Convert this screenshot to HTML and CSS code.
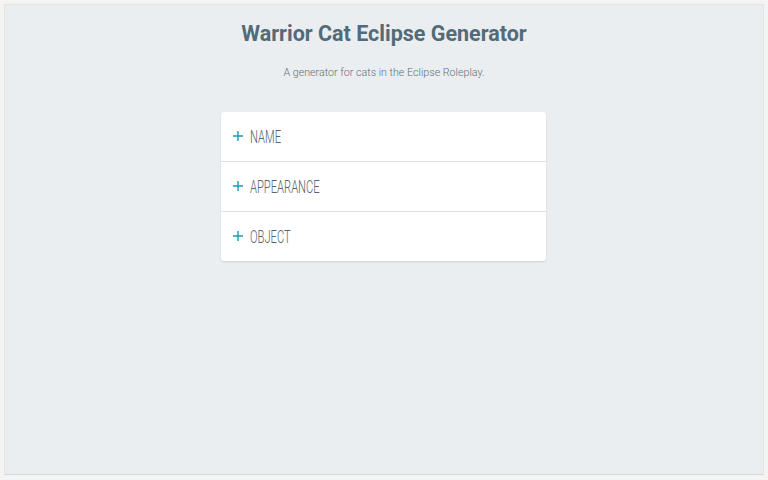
FILE: index.html
```html
<!DOCTYPE html>
<html>
<head>
<meta charset="utf-8">
<link rel="stylesheet" href="styles.css">
</head>
<body>
<div class="panel">
  <h1 class="title">Warrior Cat Eclipse Generator</h1>
  <p class="subtitle">A generator for cats in the Eclipse Roleplay.</p>
  <div class="card">
    <div class="row"><svg class="plus" viewBox="0 0 10 10" width="10" height="10"><path d="M5 0V10M0 5H10" stroke="#1a9db0" stroke-width="1.4" fill="none"/></svg><span class="label">NAME</span></div>
    <div class="row"><svg class="plus" viewBox="0 0 10 10" width="10" height="10"><path d="M5 0V10M0 5H10" stroke="#1a9db0" stroke-width="1.4" fill="none"/></svg><span class="label">APPEARANCE</span></div>
    <div class="row"><svg class="plus" viewBox="0 0 10 10" width="10" height="10"><path d="M5 0V10M0 5H10" stroke="#1a9db0" stroke-width="1.4" fill="none"/></svg><span class="label">OBJECT</span></div>
  </div>
</div>
</body>
</html>
```
FILE: styles.css
```css
html, body { margin: 0; padding: 0; }
body {
  background: #f4f4f3;
  padding: 4px;
  height: 480px;
  box-sizing: border-box;
  font-family: Roboto, "Liberation Sans", sans-serif;
}
.panel {
  background: #eaeef1;
  height: 471px;
  box-sizing: border-box;
  border: 1px solid #e2e5e8;
  border-bottom-color: #d5d8dc;
  display: flex;
  flex-direction: column;
  align-items: center;
}
.title {
  margin: 15px 0 0;
  font-size: 21.5px;
  font-weight: 700;
  color: #536a78;
  line-height: 28px;
}
.subtitle {
  margin: 18px 0 0;
  font-size: 10.7px;
  font-weight: 300;
  color: #5f6e78;
  line-height: 14px;
}
.card {
  margin: 32px 2px 0 0;
  width: 325px;
  background: #fff;
  border-radius: 3px;
  box-shadow: 0 1px 2px rgba(0,0,0,0.12);
  display: flex;
  flex-direction: column;
}
.row {
  box-sizing: border-box;
  height: 50px;
  display: flex;
  align-items: center;
  padding-left: 12px;
  border-top: 1px solid #dde1e4;
}
.row:first-child { border-top: none; height: 49px; }
.plus {
  flex: none;
  margin-right: 7px;
  margin-top: -2px;
}
.label {
  display: inline-block;
  font-size: 18px;
  font-weight: 300;
  color: #56636d;
  transform: scaleX(0.62);
  transform-origin: left center;
  line-height: 1;
}
```
